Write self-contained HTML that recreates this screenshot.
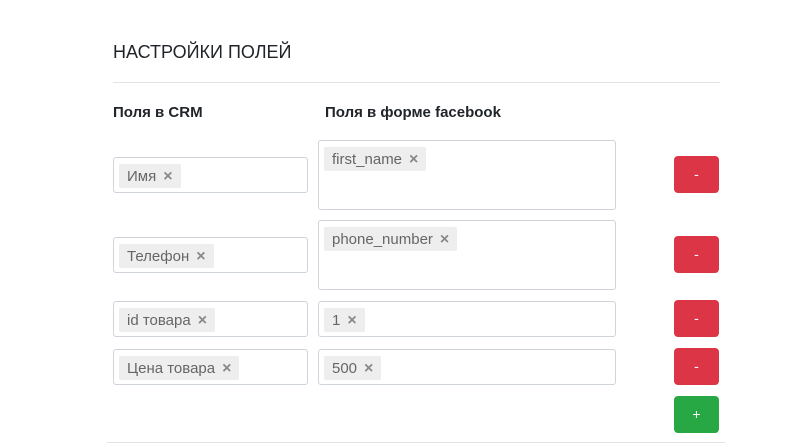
<!DOCTYPE html>
<html><head><meta charset="utf-8"><style>
body{margin:0;background:#fff;font-family:"Liberation Sans","DejaVu Sans",sans-serif;width:785px;height:445px;overflow:hidden;position:relative}
.a{position:absolute}
.t{left:113px;top:42px;font-size:18px;color:#212529}
.hr{left:113px;top:82px;width:607px;height:1px;background:#e3e3e3}
.h{top:104px;font-size:15px;font-weight:bold;color:#212529}
.box{border:1px solid #ced4da;border-radius:3px;box-sizing:border-box;background:#fff}
.tag{position:absolute;left:5px;top:6px;height:24px;line-height:25px;background:#eee;border-radius:2px;padding:0 8px;font-size:15px;color:#666;white-space:nowrap}
.tag b{font-weight:bold;color:#888;margin-left:7px;font-size:16px}
.btn{left:674px;width:45px;height:37px;border-radius:4px;color:#fff;text-align:center;line-height:36px;font-size:14px}
.r{background:#dc3545}.g{background:#28a745}
</style></head><body>
<div class="a t">НАСТРОЙКИ ПОЛЕЙ</div>
<div class="a hr"></div>
<div class="a h" style="left:113px">Поля в CRM</div>
<div class="a h" style="left:325px">Поля в форме facebook</div>

<div class="a box" style="left:113px;top:157px;width:195px;height:36px"><span class="tag">Имя<b>×</b></span></div>
<div class="a box" style="left:318px;top:140px;width:298px;height:70px"><span class="tag">first_name<b>×</b></span></div>
<div class="a btn r" style="top:156px">-</div>

<div class="a box" style="left:113px;top:237px;width:195px;height:36px"><span class="tag">Телефон<b>×</b></span></div>
<div class="a box" style="left:318px;top:220px;width:298px;height:70px"><span class="tag">phone_number<b>×</b></span></div>
<div class="a btn r" style="top:236px">-</div>

<div class="a box" style="left:113px;top:301px;width:195px;height:36px"><span class="tag">id товара<b>×</b></span></div>
<div class="a box" style="left:318px;top:301px;width:298px;height:36px"><span class="tag">1<b>×</b></span></div>
<div class="a btn r" style="top:300px">-</div>

<div class="a box" style="left:113px;top:349px;width:195px;height:36px"><span class="tag">Цена товара<b>×</b></span></div>
<div class="a box" style="left:318px;top:349px;width:298px;height:36px"><span class="tag">500<b>×</b></span></div>
<div class="a btn r" style="top:348px">-</div>

<div class="a btn g" style="top:396px">+</div>
<div class="a" style="left:107px;top:442px;width:618px;height:1px;background:#e3e3e3"></div>
</body></html>
